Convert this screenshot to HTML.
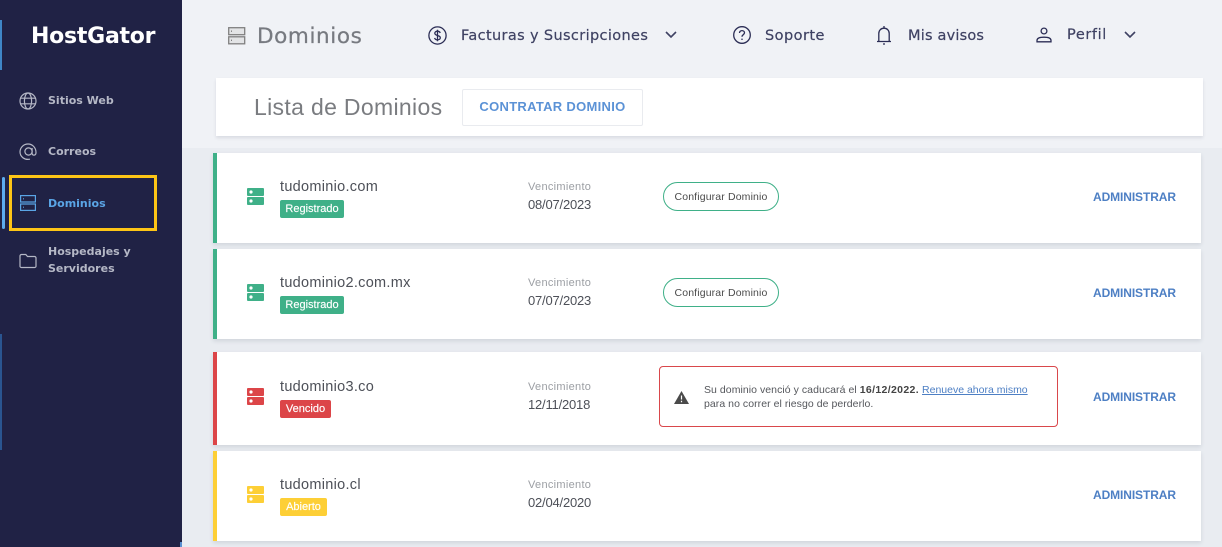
<!DOCTYPE html>
<html lang="es"><head><meta charset="utf-8"><title>Dominios</title>
<style>
*{box-sizing:border-box;margin:0;padding:0}
html,body{width:1222px;height:547px;overflow:hidden;background:#e9ecf1}
body{position:relative;font-family:"Liberation Sans",sans-serif}
.a{position:absolute;white-space:nowrap}
.w{font-family:"DejaVu Sans",sans-serif}
.card{position:absolute;left:213px;width:988px;background:#fff;border-left:4px solid;box-shadow:0 2px 4px rgba(60,70,90,.14)}
.name{font-size:14.5px;color:#4d5058;letter-spacing:.29px;line-height:17px}
.ven{font-size:11px;color:#9b9ea3;letter-spacing:.3px;line-height:14px}
.date{font-size:13px;color:#4d5058;line-height:16px;letter-spacing:-.2px}
.tag{height:18px;border-radius:2px;color:#fff;font-size:11px;line-height:18px;text-align:center;-webkit-text-stroke:.15px #fff}
.adm{left:1093px;font-size:12px;font-weight:bold;color:#4d7fc4;line-height:14px;letter-spacing:-.1px}
.cfg{left:663px;width:116px;height:29px;border:1px solid #3fb088;border-radius:15px;font-size:10.5px;color:#4b4b4b;line-height:28px;text-align:center;background:#fff;letter-spacing:.14px}
.nav{font-family:"DejaVu Sans",sans-serif;font-size:11px;font-weight:bold;color:#b5b8c6;line-height:17px;letter-spacing:0}
.top{font-size:14.5px;color:#3f4263;line-height:18px;-webkit-text-stroke:.2px #3f4263}
svg{position:absolute;overflow:visible}
</style></head><body>
<div class="a" style="left:0;top:0;width:1222px;height:148px;background:#f0f2f6"></div>
<div class="a" style="left:0;top:0;width:182px;height:547px;background:#202245"></div>
<div class="a" style="left:0;top:20px;width:2px;height:50px;background:#3f86c6"></div>
<div class="a" style="left:0;top:334px;width:2px;height:116px;background:#2a5590"></div>
<div class="a" style="left:180px;top:542px;width:2px;height:5px;background:#5a8fd0"></div>
<div class="a" style="left:2px;top:177px;width:3px;height:52px;background:#5cabef;border-radius:2px"></div>
<div class="a" style="left:9px;top:175px;width:148px;height:56px;border:3px solid #fdc516"></div>

<div class="a w" style="left:31px;top:24px;font-size:22px;font-weight:bold;color:#fff;line-height:26px;letter-spacing:-.25px">HostGator</div>

<svg style="left:19px;top:92px" width="18" height="18" viewBox="0 0 18 18" fill="none" stroke="#b5b8c6" stroke-width="1.2"><circle cx="9" cy="9" r="8"/><ellipse cx="9" cy="9" rx="3.6" ry="8"/><path d="M1.5 6.2h15M1.5 11.8h15"/></svg>
<div class="a nav" style="left:48px;top:92px">Sitios Web</div>
<svg style="left:19px;top:142px" width="18" height="19" viewBox="0 0 18 19" fill="none" stroke="#b5b8c6" stroke-width="1.2"><circle cx="9.5" cy="9.5" r="3.6"/><path d="M13.1 6v5.3c0 2.6 3.9 2.6 3.9-.8 0-4.600-3.400-8.500-8-8.500A8 8 0 0 0 1 9.800c0 4.800 4.400 8.500 10 7.400"/></svg>
<div class="a nav" style="left:48px;top:143px">Correos</div>
<svg style="left:20px;top:195px" width="16" height="16" viewBox="0 0 16 16" fill="none" stroke="#5aa5e6" stroke-width="1.2"><rect x=".6" y=".6" width="14.800" height="6.400"/><rect x=".6" y="9" width="14.800" height="6.400"/><path d="M3 3.800h1M3 12.200h1"/></svg>
<div class="a nav" style="left:48px;top:195px;color:#5aa5e6">Dominios</div>
<svg style="left:19px;top:253px" width="18" height="16" viewBox="0 0 18 16" fill="none" stroke="#b5b8c6" stroke-width="1.2"><path d="M1 3a1.500 1.500 0 0 1 1.500-1.500h4.300l1.700 2h7A1.500 1.500 0 0 1 17 5v8.200a1.300 1.300 0 0 1-1.300 1.300H2.300A1.300 1.300 0 0 1 1 13.200z"/></svg>
<div class="a nav" style="left:48px;top:243px">Hospedajes y</div>
<div class="a nav" style="left:48px;top:260px">Servidores</div>

<svg style="left:228px;top:27px" width="18" height="18" viewBox="0 0 18 18" fill="#e3e4e6" stroke="#808080" stroke-width="1.300"><rect x=".7" y=".7" width="16" height="7"/><rect x=".7" y="9.800" width="16" height="7"/><path d="M3 4.200h1M3 13.300h1"/></svg>
<div class="a w" style="left:257px;top:23px;font-size:21.500px;color:#777a80;line-height:27px;letter-spacing:.6px;-webkit-text-stroke:.25px #777a80">Dominios</div>

<svg style="left:428px;top:26px" width="19" height="19" viewBox="0 0 19 19" fill="none" stroke="#2b2d55" stroke-width="1.300"><circle cx="9.500" cy="9.500" r="8.600"/><path d="M12.200 7c-.4-1.300-1.400-1.800-2.700-1.800-1.500 0-2.700.8-2.700 2.100 0 2.900 5.500 1.500 5.500 4.400 0 1.300-1.200 2.100-2.800 2.100-1.400 0-2.500-.6-2.900-1.900M9.500 3.700v11.600"/></svg>
<div class="a w top" style="left:461px;top:27px;letter-spacing:.36px">Facturas y Suscripciones</div>
<svg style="left:665px;top:31px" width="12" height="8" viewBox="0 0 12 8" fill="none" stroke="#3f4263" stroke-width="1.600"><path d="M1 1l5 5 5-5"/></svg>
<svg style="left:733px;top:26px" width="18" height="18" viewBox="0 0 18 18" fill="none" stroke="#2b2d55" stroke-width="1.300"><circle cx="9" cy="9" r="8.300"/><path d="M6.500 7c0-1.500 1.100-2.400 2.500-2.400s2.500.9 2.500 2.200c0 1.900-2.500 1.900-2.500 3.900"/><path d="M9 12.600v1.400"/></svg>
<div class="a w top" style="left:765px;top:27px;letter-spacing:.45px">Soporte</div>
<svg style="left:876px;top:25px" width="16" height="20" viewBox="0 0 16 20" fill="none" stroke="#2b2d55" stroke-width="1.300"><path d="M1 16.500h14M2.800 16.500V8.500C2.800 5.300 5 3.200 8 3.200s5.200 2.100 5.200 5.300v8"/><path d="M8 1v2M7 19h2"/></svg>
<div class="a w top" style="left:908px;top:27px;letter-spacing:.2px">Mis avisos</div>
<svg style="left:1036px;top:27px" width="16" height="16" viewBox="0 0 16 16" fill="none" stroke="#2b2d55" stroke-width="1.300"><circle cx="8" cy="4" r="2.900"/><path d="M1 14.800v-1.300c0-2 2.500-3.300 7-3.300s7 1.300 7 3.300v1.300z"/></svg>
<div class="a w top" style="left:1067px;top:26px;letter-spacing:.6px">Perfil</div>
<svg style="left:1124px;top:31px" width="12" height="8" viewBox="0 0 12 8" fill="none" stroke="#3f4263" stroke-width="1.600"><path d="M1 1l5 5 5-5"/></svg>

<div class="a" style="left:216px;top:78px;width:987px;height:58px;background:#fff;box-shadow:0 2px 3px rgba(60,70,90,.13)"></div>
<div class="a" style="left:254px;top:92px;font-size:23px;color:#7a7c80;line-height:30px;letter-spacing:.33px">Lista de Dominios</div>
<div class="a" style="left:462px;top:89px;width:181px;height:37px;border:1px solid #e9ebef;border-radius:2px;background:#fff;color:#5b92d6;font-size:13px;font-weight:bold;line-height:34px;text-align:center;letter-spacing:.3px">CONTRATAR DOMINIO</div>

<div class="card" style="top:153px;height:90px;border-color:#3fb088"></div>
<div class="card" style="top:249px;height:90px;border-color:#3fb088"></div>
<div class="card" style="top:352px;height:93px;border-color:#dc4548"></div>
<div class="card" style="top:451px;height:90px;border-color:#fdcf36"></div>

<svg style="left:247px;top:188px" width="17" height="18" viewBox="0 0 17 18" fill="#3fb088"><rect width="17" height="8" x="0" y="0" rx="1"/><rect width="17" height="8" x="0" y="9" rx="1"/><circle cx="4" cy="4" r="1.600" fill="#fff"/><circle cx="4" cy="13" r="1.600" fill="#fff"/></svg>
<svg style="left:247px;top:284px" width="17" height="18" viewBox="0 0 17 18" fill="#3fb088"><rect width="17" height="8" x="0" y="0" rx="1"/><rect width="17" height="8" x="0" y="9" rx="1"/><circle cx="4" cy="4" r="1.600" fill="#fff"/><circle cx="4" cy="13" r="1.600" fill="#fff"/></svg>
<svg style="left:247px;top:388px" width="17" height="18" viewBox="0 0 17 18" fill="#dc4548"><rect width="17" height="8" x="0" y="0" rx="1"/><rect width="17" height="8" x="0" y="9" rx="1"/><circle cx="4" cy="4" r="1.600" fill="#fff"/><circle cx="4" cy="13" r="1.600" fill="#fff"/></svg>
<svg style="left:247px;top:486px" width="17" height="18" viewBox="0 0 17 18" fill="#fdcf36"><rect width="17" height="8" x="0" y="0" rx="1"/><rect width="17" height="8" x="0" y="9" rx="1"/><circle cx="4" cy="4" r="1.600" fill="#fff"/><circle cx="4" cy="13" r="1.600" fill="#fff"/></svg>

<div class="a name" style="left:280px;top:179px">tudominio.com</div>
<div class="a tag" style="left:280px;top:200px;width:64px;background:#3fb088">Registrado</div>
<div class="a ven" style="left:528px;top:180px">Vencimiento</div>
<div class="a date" style="left:528px;top:197px">08/07/2023</div>
<div class="a cfg" style="top:182px">Configurar Dominio</div>
<div class="a adm" style="top:190px">ADMINISTRAR</div>

<div class="a name" style="left:280px;top:275px">tudominio2.com.mx</div>
<div class="a tag" style="left:280px;top:296px;width:64px;background:#3fb088">Registrado</div>
<div class="a ven" style="left:528px;top:276px">Vencimiento</div>
<div class="a date" style="left:528px;top:293px">07/07/2023</div>
<div class="a cfg" style="top:278px">Configurar Dominio</div>
<div class="a adm" style="top:286px">ADMINISTRAR</div>

<div class="a name" style="left:280px;top:379px">tudominio3.co</div>
<div class="a tag" style="left:280px;top:400px;width:51px;background:#dc4548">Vencido</div>
<div class="a ven" style="left:528px;top:380px">Vencimiento</div>
<div class="a date" style="left:528px;top:397px">12/11/2018</div>
<div class="a" style="left:659px;top:366px;width:399px;height:61px;border:1px solid #d9474b;border-radius:4px;background:#fff"></div>
<svg style="left:674px;top:391px" width="15" height="13" viewBox="0 0 15 13"><path d="M7.500 0L15 13H0z" fill="#4a4a4a"/><path d="M7.500 4.500v4M7.500 9.800v1.400" stroke="#fff" stroke-width="1.200"/></svg>
<div class="a" style="left:704px;top:383px;font-size:10.500px;color:#55575c;line-height:14px;letter-spacing:.05px">Su dominio venció y caducará el <b style="color:#444;letter-spacing:.35px">16/12/2022.</b><span style="color:#4d7fc4;text-decoration:underline;letter-spacing:0;margin-left:3px">Renueve ahora mismo</span></div>
<div class="a" style="left:704px;top:397px;font-size:10.500px;color:#55575c;line-height:14px;letter-spacing:.05px">para no correr el riesgo de perderlo.</div>
<div class="a adm" style="top:390px">ADMINISTRAR</div>

<div class="a name" style="left:280px;top:477px">tudominio.cl</div>
<div class="a tag" style="left:280px;top:498px;width:47px;background:#fdcf36">Abierto</div>
<div class="a ven" style="left:528px;top:478px">Vencimiento</div>
<div class="a date" style="left:528px;top:495px">02/04/2020</div>
<div class="a adm" style="top:488px">ADMINISTRAR</div>
</body></html>
